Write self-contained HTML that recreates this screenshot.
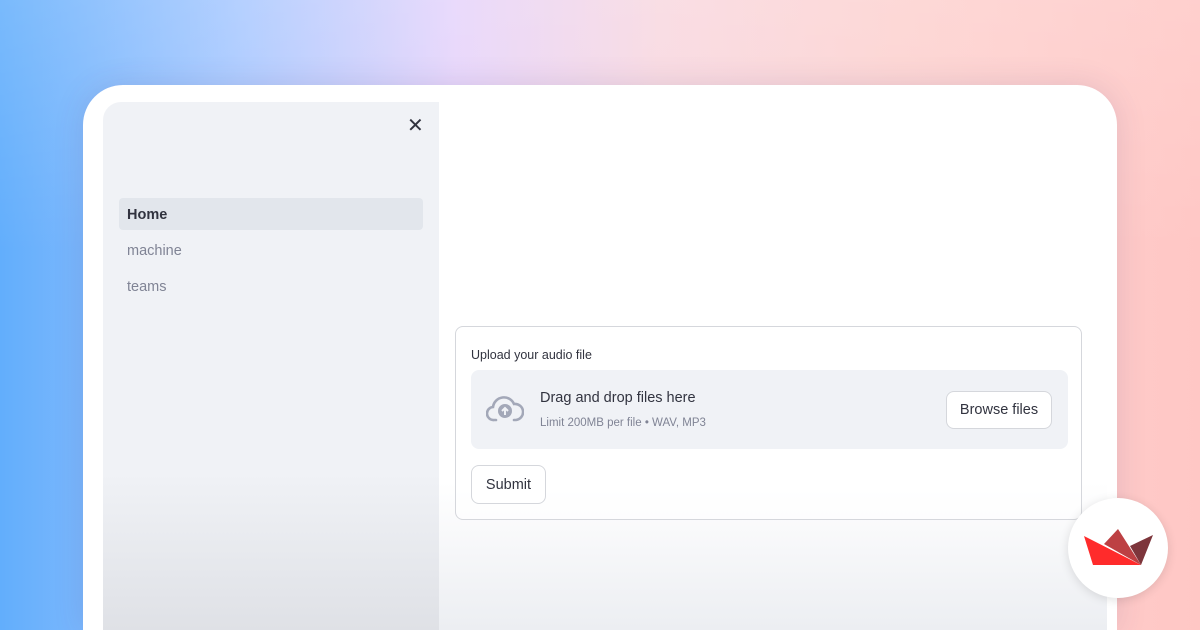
<!DOCTYPE html>
<html><head><style>
*{margin:0;padding:0;box-sizing:border-box}
html,body{width:1200px;height:630px;overflow:hidden}
body{position:relative;font-family:"Liberation Sans",sans-serif;
background:linear-gradient(90deg,#62aefc 0%,#a8c8ff 20%,#e6d4fb 38%,#f8d8e0 55%,#fdd2d0 75%,#ffc7c5 100%);}
.glow{position:absolute;left:0;top:0;width:1200px;height:630px;background:linear-gradient(180deg,rgba(255,255,255,0.15),rgba(255,255,255,0) 40%);}
.frame{position:absolute;left:83px;top:85px;width:1034px;height:545px;background:#fff;border-radius:40px 40px 0 0;box-shadow:0 0 30px rgba(80,60,120,0.15)}
.inner{position:absolute;left:103px;top:102px;width:1004px;height:528px;border-radius:18px 0 0 0;overflow:hidden;background:linear-gradient(180deg,#fff 0,#fff 380px,#eceef2 528px)}
.side{position:absolute;left:0;top:0;width:336px;height:100%;background:linear-gradient(180deg,#f0f2f6 0,#f0f2f6 370px,#dfe1e6 528px)}
.close{position:absolute;left:304px;top:11px;font-size:20px;color:#31333f}
.nav{position:absolute;left:16px;width:304px;height:32px;border-radius:4px;padding-left:8px;line-height:34px;font-size:14.5px;color:#808495}
.card{position:absolute;left:455px;top:326px;width:627px;height:194px;border:1px solid #d5d7dc;border-radius:8px;background:rgba(255,255,255,0.6)}
.lbl{position:absolute;left:15px;top:21px;font-size:12.5px;color:#31333f}
.drop{position:absolute;left:15px;top:43px;width:597px;height:79px;background:#f0f2f6;border-radius:8px}
.btn{position:absolute;background:#fff;border:1px solid #d5d7dc;border-radius:8px;color:#31333f;font-size:14.5px;text-align:center}
.logo{position:absolute;left:1068px;top:498px;width:100px;height:100px;border-radius:50%;background:#fff;box-shadow:0 2px 10px rgba(0,0,0,0.12)}
</style></head><body>
<div class="glow"></div>
<div class="frame"></div>
<div class="inner">
 <div class="side">
  <div class="close">✕</div>
  <div class="nav" style="top:96px;background:#e2e6ec;color:#31333f;font-weight:bold">Home</div>
  <div class="nav" style="top:132px">machine</div>
  <div class="nav" style="top:168px">teams</div>
 </div>
</div>
<div class="card">
 <div class="lbl">Upload your audio file</div>
 <div class="drop">
  <svg style="position:absolute;left:15px;top:25px" width="38" height="28" viewBox="0 0 38 28"><path d="M10 25H8a6.5 6.5 0 0 1-1-13A11 11 0 0 1 28 9a8 8 0 0 1 2 16h-2" fill="none" stroke="#a3a8b8" stroke-width="2.6" stroke-linecap="round"/><circle cx="19" cy="16" r="7" fill="#a3a8b8"/><path d="M19 20v-7M16 16l3-3 3 3" stroke="#f0f2f6" stroke-width="2" fill="none"/></svg>
  <div style="position:absolute;left:69px;top:20px;font-size:14.5px;color:#31333f">Drag and drop files here</div>
  <div style="position:absolute;left:69px;top:47px;font-size:11.5px;color:#808495">Limit 200MB per file • WAV, MP3</div>
  <div class="btn" style="left:475px;top:21px;width:106px;height:38px;line-height:36px">Browse files</div>
 </div>
 <div class="btn" style="left:15px;top:138px;width:75px;height:39px;line-height:38px">Submit</div>
</div>
<div class="logo"><svg width="100" height="100" viewBox="1068 498 100 100">
<polygon points="1084,536 1093,565 1141,565" fill="#ff2b2b"/>
<polygon points="1104,544 1118,529 1141,565" fill="#bd4043"/>
<polygon points="1130,546 1153,535 1141,565" fill="#7d353b"/>
</svg></div>
</body></html>
